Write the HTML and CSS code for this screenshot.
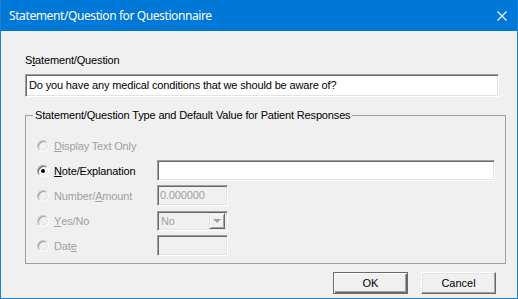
FILE: index.html
```html
<!DOCTYPE html>
<html lang="en">
<head>
  <meta charset="UTF-8">
  <title>Statement/Question for Questionnaire</title>
  <link rel="stylesheet" href="styles.css">
</head>
<body>
  <div class="window">
    <div class="titlebar">
      <span class="title">Statement/Question for Questionnaire</span>
      <svg class="close" width="10" height="10" viewBox="0 0 10 10">
        <path d="M0.5 0.5 L9.5 9.5 M9.5 0.5 L0.5 9.5" stroke="#fff" stroke-width="1.1" fill="none"/>
      </svg>
    </div>

    <div class="content">
      <div class="label">S<u>t</u>atement/Question</div>
      <div class="field wide">Do you have any medical conditions that we should be aware of?</div>

      <fieldset class="group">
        <legend>Statement/Question Type and Default Value for Patient Responses</legend>
        <div class="rows">
          <div class="opt disabled"><span class="radio"></span><u>D</u>isplay Text Only</div>
          <div></div>

          <div class="opt"><span class="radio checked"></span><u>N</u>ote/Explanation</div>
          <div class="field note"></div>

          <div class="opt disabled"><span class="radio"></span>Number/<u>A</u>mount</div>
          <div class="field small off">0.000000</div>

          <div class="opt disabled"><span class="radio"></span><u>Y</u>es/No</div>
          <div class="field small off combo">No<span class="drop"><span class="arrow"></span></span></div>

          <div class="opt disabled"><span class="radio"></span>Dat<u>e</u></div>
          <div class="field small off"></div>
        </div>
      </fieldset>

      <div class="buttons">
        <button class="btn default">OK</button>
        <button class="btn">Cancel</button>
      </div>
    </div>
  </div>
</body>
</html>
```

FILE: styles.css
```css
body {
  margin: 0;
  font-family: "Liberation Sans", Arial, sans-serif;
  font-size: 11px;
  letter-spacing: -0.15px;
  color: #000;
}
.window {
  width: 518px;
  height: 299px;
  box-sizing: border-box;
  border: 1px solid #1a82d6;
  border-top: 0;
  background: #f0f0f0;
}
.titlebar {
  height: 31px;
  background: #0078d7;
  color: #fff;
  display: flex;
  align-items: center;
  justify-content: space-between;
  padding: 0 10px 0 8px;
}
.title {
  font-family: "Noto Sans", sans-serif;
  font-size: 12px;
  letter-spacing: -0.4px;
  margin-top: -1px;
}
.content {
  padding: 23px 0 0 24px;
}
.label {
  line-height: 13px;
  height: 13px;
}
.field {
  box-sizing: border-box;
  background: #fff;
  border: 1px solid;
  border-color: #a0a0a0 #fff #fff #a0a0a0;
  box-shadow: inset 1px 1px #696969, inset -1px -1px #e3e3e3;
  padding: 0 3px;
  line-height: 19px;
  white-space: nowrap;
  overflow: hidden;
}
.wide {
  width: 474px;
  height: 23px;
  margin-top: 7px;
  line-height: 21px;
}
.group {
  width: 481px;
  box-sizing: border-box;
  margin: 12px 0 0;
  padding: 0 0 5px 11px;
  border: 1px solid #a0a0a0;
}
.group legend {
  margin-left: -4px;
  padding: 0 2px;
  line-height: 13px;
}
.rows {
  display: grid;
  grid-template-columns: 120px 1fr;
  grid-auto-rows: 25px;
  align-items: center;
  margin-top: 11px;
}
.opt {
  display: flex;
  align-items: center;
}
.disabled {
  color: #a0a0a0;
}
.radio {
  width: 12px;
  height: 12px;
  box-sizing: border-box;
  border-radius: 50%;
  border: 1px solid;
  border-color: #a0a0a0 #fff #fff #a0a0a0;
  box-shadow: inset 1px 1px #696969, inset -1px -1px #e3e3e3;
  background: #fff;
  margin-right: 5px;
  display: flex;
  align-items: center;
  justify-content: center;
}
.disabled .radio {
  background: #f0f0f0;
  border-color: #c8c8c8 #fff #fff #c8c8c8;
  box-shadow: inset 1px 1px #a0a0a0, inset -1px -1px #e3e3e3;
}
.radio.checked::after {
  content: "";
  width: 4px;
  height: 4px;
  border-radius: 50%;
  background: #000;
}
.note {
  width: 338px;
  height: 21px;
}
.small {
  width: 71px;
  height: 21px;
}
.off {
  background: #f0f0f0;
  color: #a0a0a0;
  padding: 0 2px;
}
.combo {
  height: 20px;
  display: flex;
  align-items: center;
  justify-content: space-between;
  padding: 0 2px 0 3px;
  line-height: 16px;
}
.drop {
  width: 16px;
  height: 16px;
  box-sizing: border-box;
  background: #f0f0f0;
  border: 1px solid;
  border-color: #e3e3e3 #696969 #696969 #e3e3e3;
  box-shadow: inset 1px 1px #fff, inset -1px -1px #a0a0a0;
  display: flex;
  align-items: center;
  justify-content: center;
}
.arrow {
  width: 0;
  height: 0;
  border-left: 4px solid transparent;
  border-right: 4px solid transparent;
  border-top: 4px solid #a0a0a0;
}
.buttons {
  display: flex;
  justify-content: flex-end;
  gap: 13px;
  margin-top: 8px;
  padding-right: 21px;
}
.btn {
  width: 75px;
  height: 22px;
  box-sizing: border-box;
  font-family: "Liberation Sans", Arial, sans-serif;
  font-size: 11px;
  color: #000;
  background: #f0f0f0;
  border: 1px solid;
  border-color: #fff #696969 #696969 #fff;
  box-shadow: inset -1px -1px #a0a0a0, inset 1px 1px #e3e3e3;
  padding: 0;
}
.btn.default {
  border-color: #696969;
  box-shadow: inset 1px 1px #fff, inset -1px -1px #696969, inset -2px -2px #a0a0a0;
}
```
